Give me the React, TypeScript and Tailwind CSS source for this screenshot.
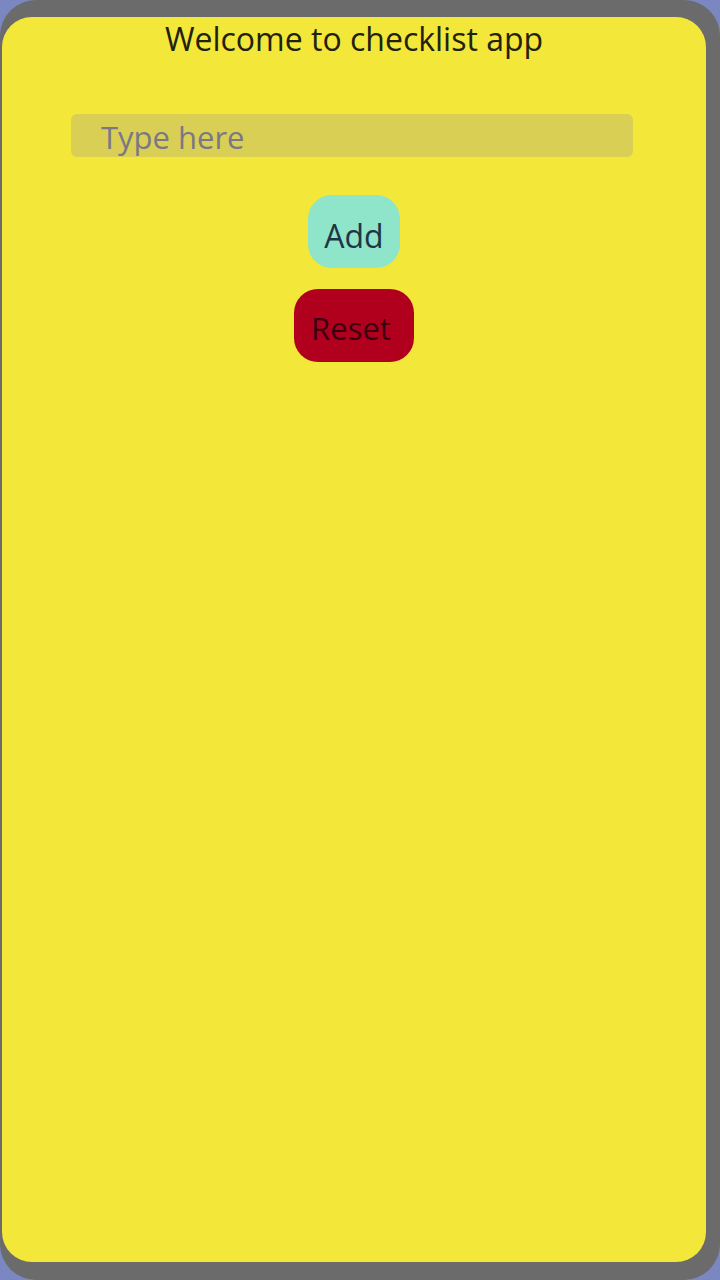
import React from "react";

export default function App() {
  return (
    <div className="w-[720px] h-[1280px] bg-[#7b87c1] overflow-hidden" style={{ fontFamily: '"Open Sans", "Noto Sans", sans-serif' }}>
      <div className="w-full h-full rounded-[36px] bg-[#6b6b6b] pt-[17px] pl-[2px] pr-[14px] pb-[18px]">
        <div className="w-full h-full rounded-[30px] bg-[#f3e73a] flex flex-col items-center">
          <h1 className="text-[32px] leading-[44px] text-[#22220c] font-normal">Welcome to checklist app</h1>
          <input
            type="text"
            placeholder="Type here"
            className="mt-[53px] self-start ml-[69px] w-[562px] h-[43px] rounded-[6px] bg-[#d9cf55] pl-[30px] pt-[3px] text-[31px] text-[#333] placeholder:text-[#7a7885] outline-none"
          />
          <button className="mt-[38px] w-[92px] h-[73px] rounded-[24px] bg-[#8ee5c9] text-[32px] leading-[44px] pt-[8px] text-[#1e3546] flex items-center justify-center">
            Add
          </button>
          <button className="mt-[21px] w-[120px] h-[73px] rounded-[24px] bg-[#b0001d] text-[31px] leading-[44px] pt-[4px] pr-[6px] text-[#3a0010] flex items-center justify-center">
            Reset
          </button>
        </div>
      </div>
    </div>
  );
}
